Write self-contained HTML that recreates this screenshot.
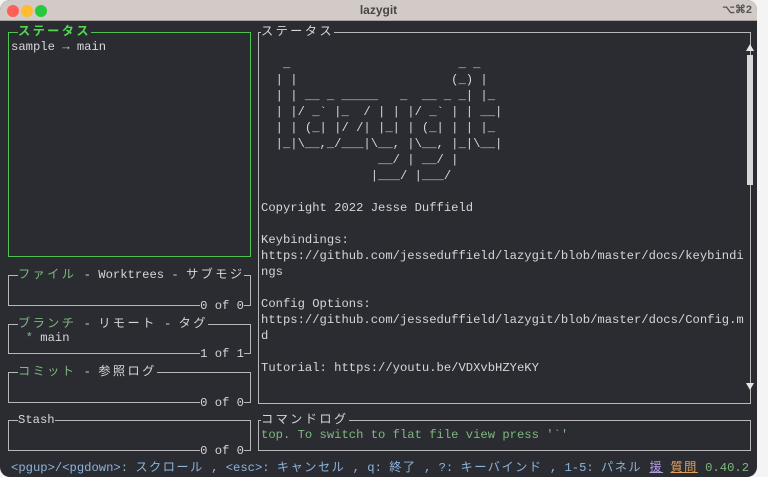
<!DOCTYPE html>
<html><head><meta charset="utf-8"><style>
*{margin:0;padding:0;box-sizing:border-box}
body{width:768px;height:477px;background:#f4f4f4;position:relative;overflow:hidden;font-family:"Liberation Mono","Noto Sans CJK JP",monospace;font-size:12.2px;color:#d6d6d6}
.win{position:absolute;left:0;top:0;width:757px;height:477px;background:#2b2c32;border-radius:10px;overflow:hidden}
.tb{position:absolute;left:0;top:0;width:757px;height:21px;background:#d2cac7;border-bottom:1px solid #a9a29f}
.tb .t{position:absolute;left:0;right:0;top:3px;text-align:center;font-family:"Liberation Sans",sans-serif;font-weight:bold;font-size:12px;color:#4a4544}
.tb .k{position:absolute;right:5px;top:3px;font-family:"Liberation Sans",sans-serif;font-weight:bold;font-size:11px;color:#5a5452}
.dot{position:absolute;top:5px;width:12px;height:12px;border-radius:50%}
.box{position:absolute;border:1px solid #b8b8b8}
.g{border-color:#4fc34f}
.ti{position:absolute;top:-9px;left:8px;background:#2b2c32;line-height:16px;white-space:pre}
.br{position:absolute;bottom:-9px;right:6px;background:#2b2c32;line-height:16px;white-space:pre}
.j{letter-spacing:2.4px}
.jb{letter-spacing:1.5px}
pre{position:absolute;font-family:inherit;font-size:inherit;line-height:16px;white-space:pre}
.gr{color:#7eb87e}
.bl{color:#8db4dc}
</style></head><body>
<div class="win">
<div class="tb"><div class="dot" style="left:7px;background:#fe5f57"></div><div class="dot" style="left:21px;background:#febc2e"></div><div class="dot" style="left:35px;background:#28c840"></div><div class="t">lazygit</div><div class="k">⌥⌘2</div></div>

<div class="box g" style="left:8px;top:32px;width:243px;height:225px"><span class="ti j" style="color:#4fd94f;font-weight:bold;left:9px">ステータス</span></div>
<pre style="left:11px;top:39px">sample → main</pre>

<div class="box" style="left:8px;top:275px;width:243px;height:31px"><span class="ti" style="left:9px"><span class="j gr">ファイル</span> - Worktrees - <span class="j">サブモジ</span></span><span class="br">0 of 0</span></div>
<div class="box" style="left:8px;top:324px;width:243px;height:30px"><span class="ti" style="left:9px"><span class="j gr">ブランチ</span> - <span class="j">リモート</span> - <span class="j">タグ</span></span><span class="br">1 of 1</span></div>
<pre style="left:11px;top:330px"><span class="gr">  *</span> main</pre>
<div class="box" style="left:8px;top:372px;width:243px;height:31px"><span class="ti" style="left:9px"><span class="j gr">コミット</span> - <span class="j">参照ログ</span></span><span class="br">0 of 0</span></div>
<div class="box" style="left:8px;top:420px;width:243px;height:31px"><span class="ti" style="left:9px">Stash</span><span class="br">0 of 0</span></div>

<div class="box" style="left:258px;top:32px;width:493px;height:372px"><span class="ti j" style="left:2px">ステータス</span></div>
<div style="position:absolute;left:746px;top:44px;width:0;height:0;border-left:4px solid transparent;border-right:4px solid transparent;border-bottom:7px solid #e6e6e6"></div>
<div style="position:absolute;left:747px;top:55px;width:6px;height:130px;background:#d8d8d8"></div>
<div style="position:absolute;left:746px;top:383px;width:0;height:0;border-left:4px solid transparent;border-right:4px solid transparent;border-top:7px solid #e6e6e6"></div>
<pre style="left:261px;top:56px">   _                       _ _
  | |                     (_) |
  | | __ _ _____   _  __ _ _| |_
  | |/ _` |_  / | | |/ _` | | __|
  | | (_| |/ /| |_| | (_| | | |_
  |_|\__,_/___|\__, |\__, |_|\__|
                __/ | __/ |
               |___/ |___/

Copyright 2022 Jesse Duffield

Keybindings:
https://github.com/jesseduffield/lazygit/blob/master/docs/keybindi
ngs

Config Options:
https://github.com/jesseduffield/lazygit/blob/master/docs/Config.m
d

Tutorial: https://youtu.be/VDXvbHZYeKY</pre>

<div class="box" style="left:258px;top:420px;width:493px;height:31px"><span class="ti j" style="left:2px">コマンドログ</span></div>
<pre class="gr" style="left:261px;top:427px">top. To switch to flat file view press '`'</pre>

<pre class="bl" style="left:11px;top:460px">&lt;pgup&gt;/&lt;pgdown&gt;: <span class="jb">スクロール</span> , &lt;esc&gt;: <span class="jb">キャンセル</span> , q: <span class="jb">終了</span> , ?: <span class="jb">キーバインド</span> , 1-5: <span class="jb">パネル</span> <span class="jb" style="color:#b09be0;text-decoration:underline">援</span> <span class="jb" style="color:#e0a060;text-decoration:underline">質問</span> <span class="gr">0.40.2</span></pre>
</div>
</body></html>
